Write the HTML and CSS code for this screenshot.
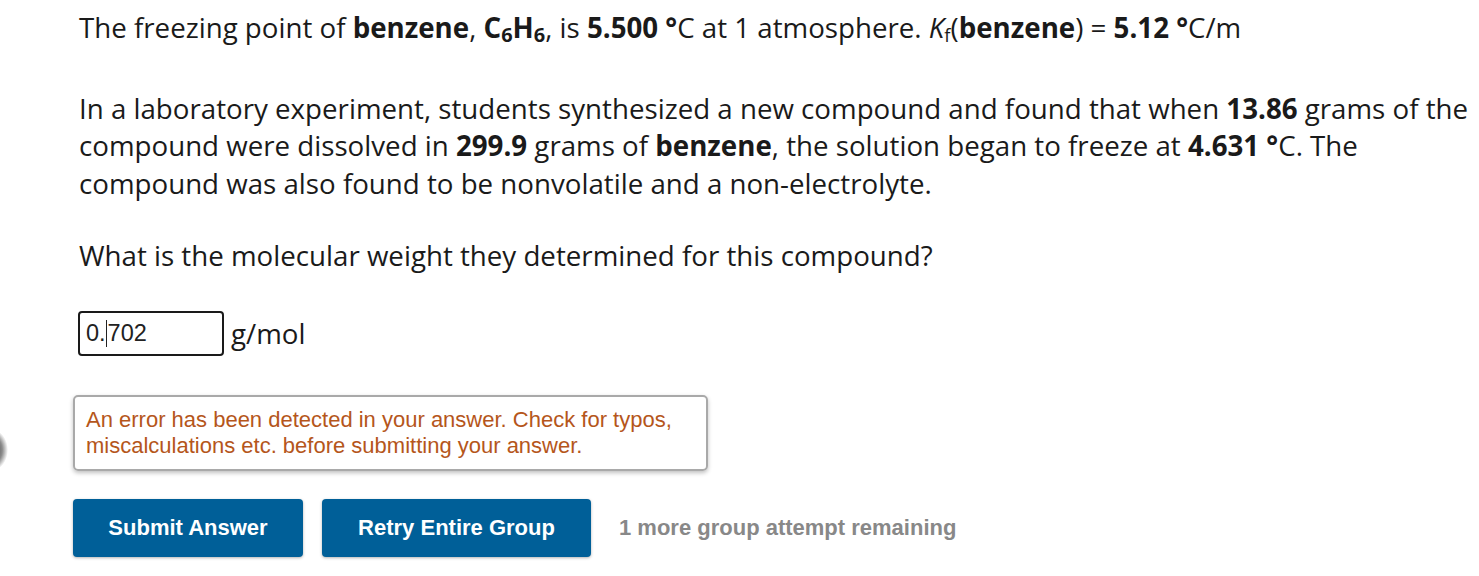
FILE: index.html
```html
<!DOCTYPE html>
<html>
<head>
<meta charset="utf-8">
<link rel="stylesheet" href="styles.css">
</head>
<body>
<div class="edge-shadow"></div>
<div class="page">
  <p class="q q1">The freezing point of <b>benzene</b>, <b>C<sub>6</sub>H<sub>6</sub></b>, is <b>5.500 °</b>C at 1 atmosphere. <i>K</i><sub class="f">f</sub>(<b>benzene</b>) = <b>5.12 °</b>C/m</p>
  <p class="q q2">In a laboratory experiment, students synthesized a new compound and found that when <b>13.86</b> grams of the compound were dissolved in <b>299.9</b> grams of <b>benzene</b>, the solution began to freeze at <b>4.631 °</b>C. The compound was also found to be nonvolatile and a non-electrolyte.</p>
  <p class="q q3">What is the molecular weight they determined for this compound?</p>
  <div class="answer-row">
    <div class="answer-input"><span>0.</span><span class="caret"></span><span>702</span></div>
    <span class="unit">g/mol</span>
  </div>
  <div class="error-box">An error has been detected in your answer. Check for typos, miscalculations etc. before submitting your answer.</div>
  <div class="actions">
    <button class="btn btn-submit">Submit Answer</button>
    <button class="btn btn-retry">Retry Entire Group</button>
    <span class="remaining">1 more group attempt remaining</span>
  </div>
</div>
</body>
</html>
```
FILE: styles.css
```css
html, body {
  margin: 0;
  padding: 0;
  background: #ffffff;
  overflow: hidden;
}
body {
  width: 1479px;
  height: 576px;
  position: relative;
}
.edge-shadow {
  position: absolute;
  left: -30px;
  top: 428px;
  width: 38px;
  height: 44px;
  border-radius: 50%;
  background: radial-gradient(closest-side, rgba(0,0,0,0.9), rgba(0,0,0,0.45) 70%, rgba(0,0,0,0));
}
.page {
  padding: 0 0 0 79px;
  width: 1400px;
  font-family: "Open Sans", sans-serif;
  color: #1a1a1a;
}
.q {
  margin: 0;
  font-size: 27.7px;
  line-height: 37.5px;
}
.q b { font-weight: 700; }
.q sub {
  font-size: 0.72em;
  vertical-align: -0.22em;
  line-height: 0;
}
.q sub.f {
  font-size: 0.66em;
  vertical-align: -0.2em;
}
.q1 { padding-top: 9px; }
.q2 { margin-top: 43px; }
.q3 { margin-top: 35px; }
.answer-row {
  display: flex;
  align-items: center;
  gap: 7px;
  margin-top: 36px;
  margin-left: -1px;
}
.answer-input {
  width: 136px;
  height: 41px;
  border: 2px solid #1a1a1a;
  border-radius: 4px;
  display: flex;
  align-items: center;
  padding-left: 6px;
  font-family: "Liberation Sans", Arial, sans-serif;
  font-size: 23.5px;
  color: #222;
}
.caret {
  display: inline-block;
  width: 1px;
  height: 27px;
  background: #222;
  margin: 0 1px 0 0;
}
.unit {
  font-size: 27.7px;
  color: #1a1a1a;
}
.error-box {
  margin-top: 39px;
  margin-left: -6px;
  width: 610px;
  padding: 10px 10px 10px 11px;
  border: 2px solid #a9a9a9;
  border-radius: 5px;
  box-shadow: 0 2px 4px rgba(0,0,0,0.25);
  font-family: "Liberation Sans", Arial, sans-serif;
  font-size: 22px;
  line-height: 26px;
  color: #b5561b;
}
.actions {
  display: flex;
  align-items: center;
  margin-top: 28px;
  margin-left: -6px;
  gap: 19px;
}
.btn {
  height: 58px;
  border: none;
  border-radius: 4px;
  background: #005f98;
  color: #ffffff;
  font-family: "Liberation Sans", Arial, sans-serif;
  font-weight: 700;
  font-size: 22px;
  box-shadow: 0 1px 3px rgba(0,0,0,0.3);
  padding: 0;
}
.btn-submit { width: 230px; }
.btn-retry { width: 269px; }
.remaining {
  margin-left: 9px;
  font-family: "Liberation Sans", Arial, sans-serif;
  font-weight: 700;
  font-size: 22px;
  color: #888888;
}
```
